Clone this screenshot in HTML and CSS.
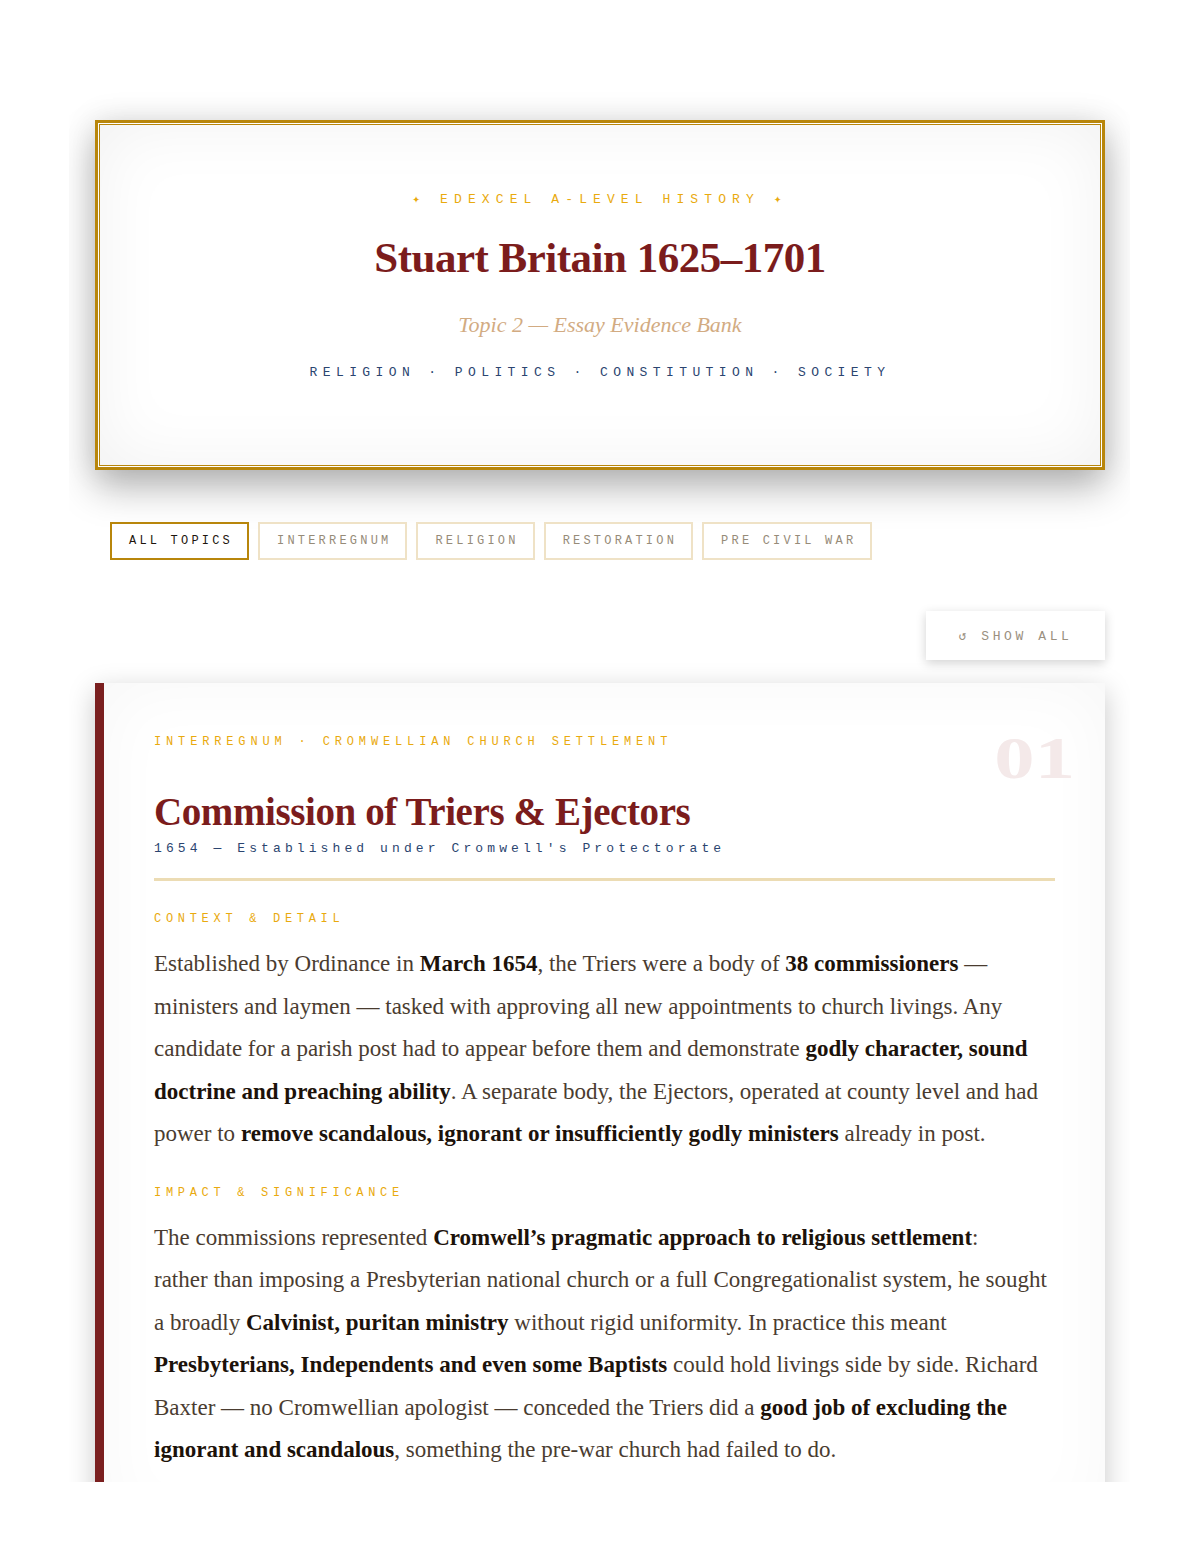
FILE: index.html
```html
<!DOCTYPE html>
<html lang="en">
<head>
<meta charset="utf-8">
<title>Stuart Britain 1625–1701 — Essay Evidence Bank</title>
<link rel="stylesheet" href="styles.css">
</head>
<body>
<div class="page">
  <header class="masthead">
    <div class="eyebrow">✦ EDEXCEL A-LEVEL HISTORY ✦</div>
    <h1 class="site-title">Stuart Britain 1625–1701</h1>
    <div class="site-sub">Topic 2 — Essay Evidence Bank</div>
    <div class="themes">RELIGION · POLITICS · CONSTITUTION · SOCIETY</div>
  </header>

  <nav class="filters">
    <button class="filter active">ALL TOPICS</button>
    <button class="filter">INTERREGNUM</button>
    <button class="filter">RELIGION</button>
    <button class="filter">RESTORATION</button>
    <button class="filter">PRE CIVIL WAR</button>
  </nav>

  <div class="toolbar">
    <button class="show-all">↺ SHOW ALL</button>
  </div>

  <article class="card">
    <div class="card-num">01</div>
    <div class="card-eyebrow">INTERREGNUM · CROMWELLIAN CHURCH SETTLEMENT</div>
    <h2 class="card-title">Commission of Triers &amp; Ejectors</h2>
    <div class="card-date">1654 — Established under Cromwell's Protectorate</div>
    <hr class="card-rule">
    <div class="section-label">CONTEXT &amp; DETAIL</div>
    <p class="body-text">Established by Ordinance in <b>March 1654</b>, the Triers were a body of <b>38 commissioners</b> — ministers and laymen — tasked with approving all new appointments to church livings. Any candidate for a parish post had to appear before them and demonstrate <b>godly character, sound doctrine and preaching ability</b>. A separate body, the Ejectors, operated at county level and had power to <b>remove scandalous, ignorant or insufficiently godly ministers</b> already in post.</p>
    <div class="section-label second">IMPACT &amp; SIGNIFICANCE</div>
    <p class="body-text">The commissions represented <b>Cromwell’s pragmatic approach to religious settlement</b>:<br>rather than imposing a Presbyterian national church or a full Congregationalist system, he sought a broadly <b>Calvinist, puritan ministry</b> without rigid uniformity. In practice this meant <b>Presbyterians, Independents and even some Baptists</b> could hold livings side by side. Richard Baxter — no Cromwellian apologist — conceded the Triers did a <b>good job of excluding the ignorant and scandalous</b>, something the pre-war church had failed to do.</p>
  </article>
</div>
</body>
</html>
```

FILE: styles.css
```css
html, body {
  margin: 0;
  padding: 0;
  background: #ffffff;
}

.page {
  box-sizing: border-box;
  width: 1061px;
  height: 1412px;
  margin: 70px 0 0 69px;
  padding: 50px 25px 0 26px;
  overflow: hidden;
  background: #ffffff;
}

/* ---------- masthead ---------- */
.masthead {
  background: #ffffff;
  border: 3px solid #b8860b;
  box-shadow:
    inset 0 0 0 1px #ffffff,
    inset 0 0 0 2px #b8860b,
    inset 0 0 70px rgba(0, 0, 0, 0.06),
    0 18px 36px rgba(0, 0, 0, 0.28),
    0 0 30px rgba(0, 0, 0, 0.10);
  padding: 67px 40px 84px;
  text-align: center;
}

.eyebrow {
  font-family: "Liberation Mono", monospace;
  font-size: 13px;
  line-height: 20px;
  letter-spacing: 6.1px;
  color: #e9aa0e;
}

.site-title {
  margin: 23px 0 0;
  font-family: "Liberation Serif", serif;
  font-weight: 700;
  font-size: 43px;
  line-height: 50px;
  letter-spacing: -0.5px;
  color: #7b1c1c;
}

.site-sub {
  margin-top: 27px;
  font-family: "Liberation Serif", serif;
  font-style: italic;
  font-size: 22px;
  line-height: 30px;
  color: #d2ab82;
}

.themes {
  margin-top: 23px;
  font-family: "Liberation Mono", monospace;
  font-size: 13px;
  line-height: 20px;
  letter-spacing: 5.4px;
  color: #2b4570;
}

/* ---------- filters ---------- */
.filters {
  display: flex;
  gap: 9px;
  margin-top: 52px;
  padding-left: 15px;
}

.filter {
  height: 38px;
  padding: 0 14px 0 17px;
  background: #ffffff;
  border: 2px solid #efe2c6;
  font-family: "Liberation Mono", monospace;
  font-size: 12px;
  letter-spacing: 3.2px;
  color: #968b78;
  cursor: pointer;
}

.filter.active {
  border-color: #b8860b;
  color: #1d150d;
}

.toolbar {
  display: flex;
  justify-content: flex-end;
  margin-top: 51px;
}

.show-all {
  width: 179px;
  height: 49px;
  padding: 0;
  background: #ffffff;
  border: none;
  box-shadow: 0 3px 10px rgba(0, 0, 0, 0.18);
  font-family: "Liberation Mono", monospace;
  font-size: 13px;
  letter-spacing: 3.6px;
  color: #9a9080;
  cursor: pointer;
}

/* ---------- card ---------- */
.card {
  position: relative;
  margin-top: 23px;
  background: #ffffff;
  border-left: 9px solid #7a1f1f;
  box-shadow:
    inset 0 0 70px rgba(0, 0, 0, 0.035),
    0 8px 26px rgba(0, 0, 0, 0.22);
  padding: 50px 50px 60px 50px;
}

.card-num {
  position: absolute;
  top: 46px;
  right: 30px;
  font-family: "Liberation Serif", serif;
  font-weight: 700;
  font-size: 72px;
  line-height: 72px;
  color: #f4e9e9;
  transform: scale(1.12, 0.82);
  transform-origin: right top;
}

.card-eyebrow {
  font-family: "Liberation Mono", monospace;
  font-size: 12px;
  line-height: 18px;
  letter-spacing: 4.85px;
  color: #e9aa0e;
}

.card-title {
  margin: 38px 0 0;
  font-family: "Liberation Serif", serif;
  font-weight: 700;
  font-size: 39px;
  line-height: 46px;
  letter-spacing: -0.4px;
  color: #7b1c1c;
}

.card-date {
  margin-top: 4px;
  font-family: "Liberation Mono", monospace;
  font-size: 13px;
  line-height: 20px;
  letter-spacing: 4.1px;
  color: #2b4570;
}

.card-rule {
  margin: 19px 0 0;
  height: 3px;
  border: none;
  background: #ecdcb4;
}

.section-label {
  margin-top: 29px;
  font-family: "Liberation Mono", monospace;
  font-size: 12px;
  line-height: 18px;
  letter-spacing: 4.7px;
  color: #e9aa0e;
}

.section-label.second {
  margin-top: 28px;
}

.body-text {
  margin: 15px 0 0;
  font-family: "Liberation Serif", serif;
  font-size: 23px;
  line-height: 42.5px;
  color: #4a3c30;
}

.body-text b {
  color: #1c120a;
  font-weight: 700;
}
```
